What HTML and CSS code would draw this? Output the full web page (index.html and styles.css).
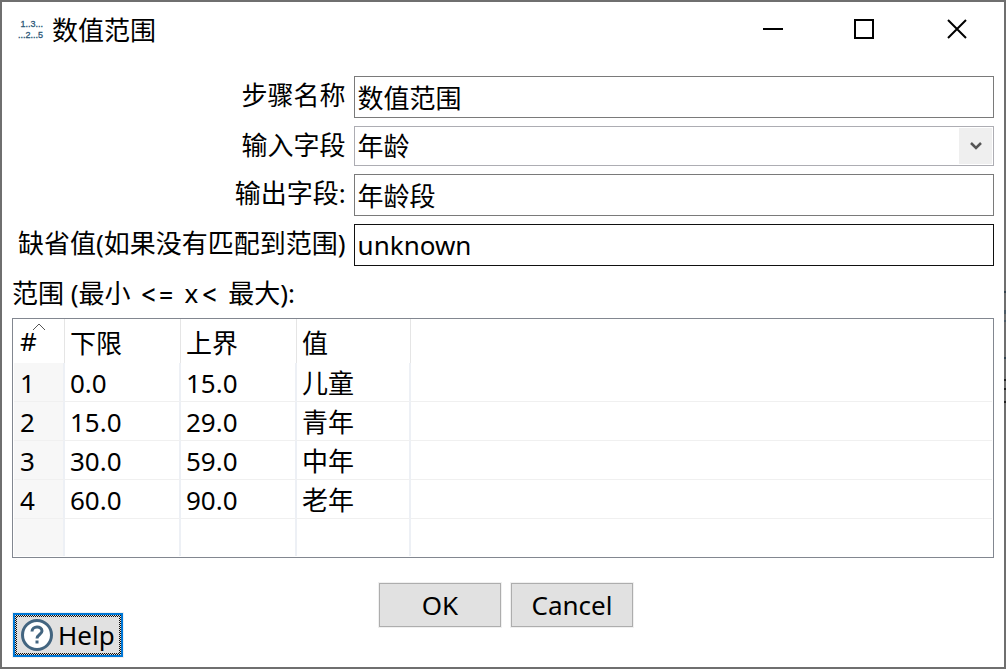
FILE: index.html
```html
<!DOCTYPE html>
<html lang="zh-CN">
<head>
<meta charset="utf-8">
<meta name="viewport" content="width=device-width, initial-scale=1">
<title>数值范围</title>
<link rel="stylesheet" href="styles.css">
</head>
<body>
<div class="dialog">
  <header class="titlebar">
    <svg class="app-icon" width="26" height="24" viewBox="0 0 26 24" aria-hidden="true">
      <text x="25" y="9" text-anchor="end">1..3...</text>
      <text x="25" y="20" text-anchor="end">...2...5</text>
    </svg>
    <h1 class="title">数值范围</h1>
    <div class="window-controls">
      <button type="button" class="window-button" aria-label="Minimize">
        <svg width="22" height="22" viewBox="0 0 22 22"><path d="M1 11h20" /></svg>
      </button>
      <button type="button" class="window-button" aria-label="Maximize">
        <svg width="22" height="22" viewBox="0 0 22 22"><path d="M1 2h18v18h-18z" /></svg>
      </button>
      <button type="button" class="window-button" aria-label="Close">
        <svg width="22" height="22" viewBox="0 0 22 22"><path d="M2 2l18 18M20 2l-18 18" /></svg>
      </button>
    </div>
  </header>

  <form class="content">
    <div class="fields">
      <label for="step-name">步骤名称</label>
      <input id="step-name" class="field" type="text" value="数值范围">
      <label for="input-field">输入字段</label>
      <div class="combo">
        <select id="input-field" class="field field-select">
          <option>年龄</option>
        </select>
        <span class="combo-arrow">
          <svg width="12" height="10" viewBox="0 0 12 10"><path d="M1 2l5 5 5-5" /></svg>
        </span>
      </div>
      <label for="output-field">输出字段:</label>
      <input id="output-field" class="field" type="text" value="年龄段">
      <label for="default-value">缺省值(如果没有匹配到范围)</label>
      <input id="default-value" class="field field-active" type="text" value="unknown">
    </div>

    <h2 class="ranges-label" id="ranges-label">范围 (最小 <span class="operator">&lt;=</span> x<span class="operator">&lt;</span> 最大):</h2>
    <div class="ranges">
      <table aria-labelledby="ranges-label">
        <colgroup>
          <col class="col-index"><col class="col-bound"><col class="col-bound"><col class="col-value"><col>
        </colgroup>
        <thead>
          <tr>
            <th class="index-head">#<svg class="sort-mark" width="14" height="8" viewBox="0 0 14 8" aria-hidden="true"><path d="M1 7l6-6 6 6" /></svg></th>
            <th>下限</th><th>上界</th><th>值</th><th></th>
          </tr>
        </thead>
        <tbody>
          <tr><td>1</td><td>0.0</td><td>15.0</td><td>儿童</td><td></td></tr>
          <tr><td>2</td><td>15.0</td><td>29.0</td><td>青年</td><td></td></tr>
          <tr><td>3</td><td>30.0</td><td>59.0</td><td>中年</td><td></td></tr>
          <tr><td>4</td><td>60.0</td><td>90.0</td><td>老年</td><td></td></tr>
          <tr><td></td><td></td><td></td><td></td><td></td></tr>
        </tbody>
      </table>
    </div>

    <footer class="actions">
      <button type="button" class="button button-help">
        <svg width="34" height="34" viewBox="0 0 34 34" aria-hidden="true">
          <circle cx="17" cy="17" r="14.5" />
          <path d="M12 13.5c0-6 10-6 10-.5 0 3.500-5 3.500-5 7.500" />
          <path d="M17 22.500v3" />
        </svg>
        Help
      </button>
      <div class="confirm">
        <button type="submit" class="button">OK</button>
        <button type="button" class="button">Cancel</button>
      </div>
    </footer>
  </form>
</div>
</body>
</html>
```
FILE: styles.css
```css
*, *::before, *::after {
  box-sizing: border-box;
}

body {
  margin: 0;
  color: #000;
  font: 26px/36px "Noto Sans", "Noto Sans CJK SC", sans-serif;
}

.dialog {
  position: relative;
  display: flex;
  flex-direction: column;
  min-height: 100vh;
  border: 2px solid #6f6f6f;
  background: #fff;
}

/* Desktop showing through the window's right edge */
.dialog::after {
  content: "";
  position: absolute;
  top: 289px;
  right: -2px;
  width: 2px;
  height: 114px;
  background:
    linear-gradient(#34434f, #34434f) 0 0 / 2px 2px,
    linear-gradient(#4b5a66, #4b5a66) 0 19px / 2px 4px,
    linear-gradient(#4b5a66, #4b5a66) 0 29px / 2px 2px,
    linear-gradient(#34434f, #34434f) 0 66px / 2px 2px,
    linear-gradient(#222, #222) 0 88px / 2px 2px,
    linear-gradient(#222, #222) 0 97px / 2px 2px,
    linear-gradient(#222, #222) 0 110px / 2px 2px;
  background-repeat: no-repeat;
}

.titlebar {
  display: flex;
  align-items: center;
  height: 56px;
  padding: 0 1px 0 16px;
}

.app-icon {
  fill: #2d5878;
  stroke: #2d5878;
  stroke-width: 0.3;
  font-family: "Liberation Sans", Arial, sans-serif;
  font-size: 9px;
}

.title {
  flex: 1;
  margin: 0 0 0 8px;
  font-size: 26px;
  font-weight: 400;
}

.window-controls {
  display: flex;
  align-self: flex-start;
}

.window-button {
  display: grid;
  place-items: center;
  width: 92px;
  height: 54px;
  padding: 0;
  border: 0;
  background: none;
}

.window-button svg {
  fill: none;
  stroke: #000;
  stroke-width: 2;
}

.content {
  display: flex;
  flex: 1;
  flex-direction: column;
  padding: 18px 10px 10px;
}

.fields {
  display: grid;
  grid-template-columns: auto 1fr;
  gap: 8px;
}

.fields label {
  padding-left: 6px;
  line-height: 38px;
  text-align: right;
}

.field {
  display: block;
  width: 100%;
  height: 42px;
  padding: 0 3px;
  border: 1px solid #7a7a7a;
  border-radius: 0;
  outline: 0;
  background: #fff;
  color: #000;
  font: inherit;
}

.field-select {
  height: 40px;
  padding: 0 36px 0 3px;
  border-color: #adadb3;
  appearance: none;
}

.field-active {
  border-color: #111;
}

.combo {
  position: relative;
}

.combo-arrow {
  position: absolute;
  top: 2px;
  right: 2px;
  bottom: 2px;
  display: grid;
  place-items: center;
  width: 33px;
  background: #efefef;
  pointer-events: none;
}

.combo-arrow svg {
  fill: none;
  stroke: #555;
  stroke-width: 2.5;
}

.ranges-label {
  margin: 9px 0 6px;
  font-size: 26px;
  font-weight: 400;
}

.operator {
  margin: 0 3px;
  font-family: Inter, "Noto Sans", sans-serif;
}

.ranges {
  padding: 0 1px 1px;
  border: 1px solid #828790;
}

table {
  width: 100%;
  border-collapse: separate;
  border-spacing: 0;
  table-layout: fixed;
}

.col-index {
  width: 51px;
}

.col-bound {
  width: 116px;
}

.col-value {
  width: 114px;
}

th,
td {
  padding: 0 0 0 5px;
  border-right: 2px solid #edf0f5;
  font-weight: 400;
  text-align: left;
}

th {
  height: 44px;
  padding-top: 4px;
  border-right: 1px solid #e5e5e5;
}

td {
  height: 39px;
  padding-top: 2px;
  border-bottom: 1px solid #f0f0f0;
}

th:last-child,
td:last-child {
  border-right: 0;
}

th:first-child,
td:first-child {
  padding-left: 6px;
}

tbody td:first-child {
  background: #f7f7f7;
}

tbody tr:last-child td {
  height: 37px;
  border-bottom: 0;
}

.index-head {
  position: relative;
  padding-top: 0;
}

.sort-mark {
  position: absolute;
  top: 4px;
  left: 18px;
  fill: none;
  stroke: #555;
}

.actions {
  display: grid;
  grid-template-columns: 1fr auto 1fr;
  flex: 1;
  padding-top: 25px;
}

.button {
  width: 122px;
  height: 44px;
  padding: 0;
  border: 1px solid #adadad;
  outline: 1px solid #f0f0f0;
  background: #e1e1e1;
  color: #000;
  font: inherit;
}

.button-help {
  position: relative;
  display: flex;
  align-items: center;
  align-self: end;
  gap: 4px;
  width: 110px;
  margin-left: 1px;
  padding-left: 5px;
  border: 2px solid #0078d7;
}

.button-help::before {
  content: "";
  position: absolute;
  inset: 0;
  padding: 2px;
  background: repeating-conic-gradient(#111 0 25%, #e1e1e1 0 50%) 0 0 / 2px 2px;
  mask: linear-gradient(#000 0 0) content-box exclude, linear-gradient(#000 0 0);
}

.button-help svg {
  flex: none;
  fill: none;
  stroke: #436580;
  stroke-width: 3;
}

.button-help circle {
  fill: #fff;
}

.confirm {
  display: flex;
  gap: 10px;
  align-self: start;
  padding-left: 6px;
}
```
